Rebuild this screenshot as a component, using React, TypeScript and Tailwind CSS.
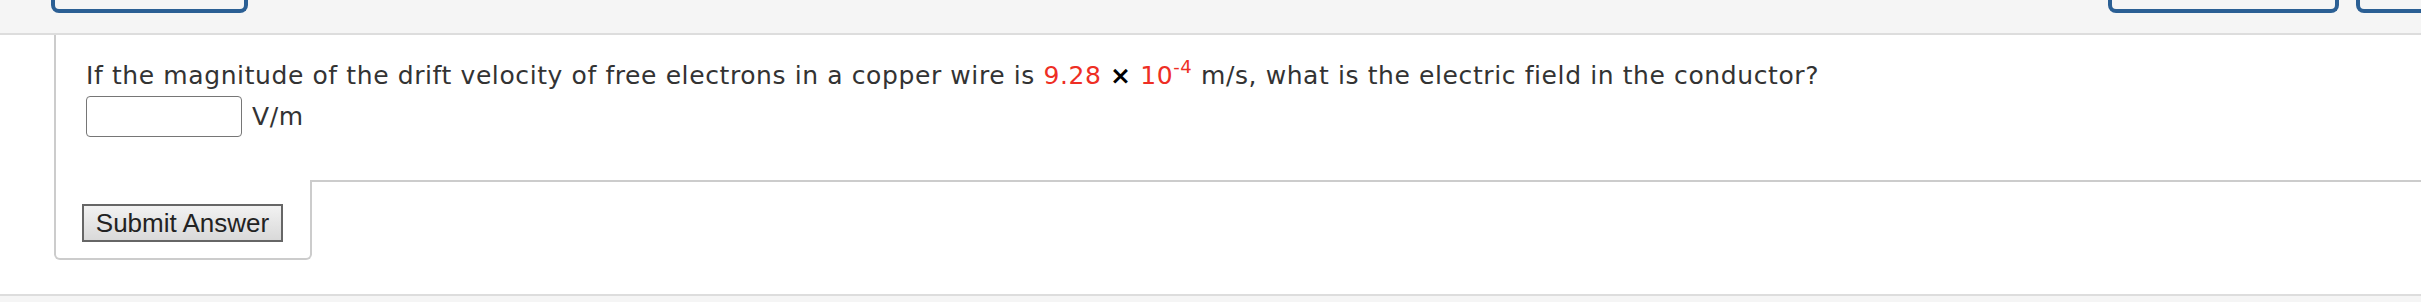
import React from 'react';

const TopTab: React.FC<{ className?: string }> = ({ className = '' }) => (
  <div className={`h-[13px] shrink-0 border-x-4 border-b-4 border-[#2b5f94] rounded-b-[8px] ${className}`} />
);

export default function App() {
  return (
    <div className="w-[2421px] h-[302px] overflow-hidden bg-[#f5f5f5]">
      {/* top nav strip */}
      <div className="flex h-[35px] border-b-2 border-[#dddddd] bg-[#f5f5f5]">
        <TopTab className="ml-[51px] w-[197px]" />
        <div className="flex-1" />
        <TopTab className="w-[231px]" />
        <TopTab className="ml-[17px] w-[200px] mr-[-135px]" />
      </div>

      {/* question area */}
      <div className="h-[259px] bg-white pl-[54px]">
        <div className="flex flex-col">
          <div
            className="h-[145px] border-l-2 border-[#cccccc] pl-[30px] pt-[26px] text-[25px] tracking-[0.6px] text-[#333333]"
            style={{ fontFamily: '"DejaVu Sans", Verdana, sans-serif' }}
          >
            <div className="leading-[30px] whitespace-nowrap">
              If the magnitude of the drift velocity of free electrons in a copper wire is{' '}
              <span className="text-[#ee2e24]">9.28</span>{' '}
              <span className="font-bold text-black">×</span>{' '}
              <span className="text-[#ee2e24]">
                10<sup className="text-[18px] -top-[11px]">-4</sup>
              </span>{' '}
              m/s, what is the electric field in the conductor?
            </div>
            <div className="flex items-center mt-[5px]">
              <input
                type="text"
                className="w-[156px] h-[41px] border-[1.5px] border-[#767676] rounded-[4px] bg-white outline-none"
              />
              <span className="ml-[10px] leading-[30px]">V/m</span>
            </div>
          </div>
          <div className="flex">
            <div className="w-[258px] h-[80px] border-l-2 border-r-2 border-b-2 border-[#cccccc] rounded-b-[6px] pl-[26px] pt-[24px]">
              <button
                className="w-[201px] h-[38px] border-2 border-[#666666] bg-gradient-to-b from-[#f2f2f2] to-[#d9d9d9] text-[26px] text-[#222222] leading-none"
                style={{ fontFamily: '"Liberation Sans", Arial, sans-serif' }}
              >
                Submit Answer
              </button>
            </div>
            <div className="flex-1 border-t-2 border-[#cccccc] -ml-[2px]" />
          </div>
        </div>
      </div>
      <div className="border-t-2 border-[#dddddd] h-[8px] bg-[#f5f5f5]" />
    </div>
  );
}
